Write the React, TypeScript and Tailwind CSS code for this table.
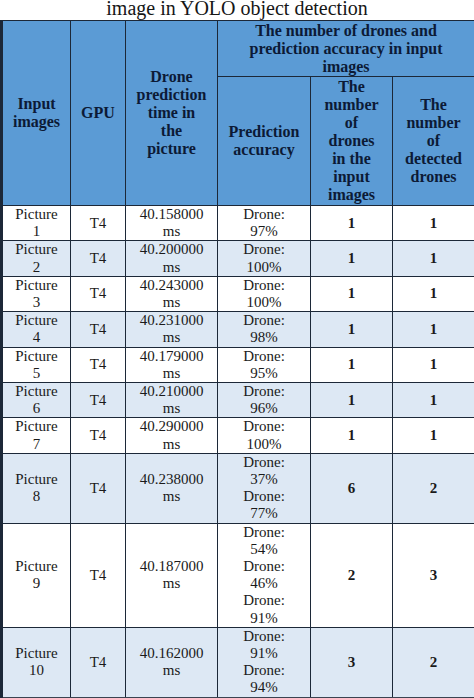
type Row = { pic: string; time: string; acc: string[]; n: string; d: string };

const rows: Row[] = [
  { pic: "1", time: "40.158000", acc: ["97%"], n: "1", d: "1" },
  { pic: "2", time: "40.200000", acc: ["100%"], n: "1", d: "1" },
  { pic: "3", time: "40.243000", acc: ["100%"], n: "1", d: "1" },
  { pic: "4", time: "40.231000", acc: ["98%"], n: "1", d: "1" },
  { pic: "5", time: "40.179000", acc: ["95%"], n: "1", d: "1" },
  { pic: "6", time: "40.210000", acc: ["96%"], n: "1", d: "1" },
  { pic: "7", time: "40.290000", acc: ["100%"], n: "1", d: "1" },
  { pic: "8", time: "40.238000", acc: ["37%", "77%"], n: "6", d: "2" },
  { pic: "9", time: "40.187000", acc: ["54%", "46%", "91%"], n: "2", d: "3" },
  { pic: "10", time: "40.162000", acc: ["91%", "94%"], n: "3", d: "2" },
];

const th = "border border-[#1c2838] bg-[#5b9bd5] p-0 text-center align-middle font-bold text-[16px] leading-[18px] text-[#0c1a36]";
const td = "border border-[#1c2838] p-0 text-center align-middle text-[15px] leading-[17.2px] text-[#1a1a1a]";

export default function App() {
  return (
    <div className="w-[474px] h-[698px] overflow-hidden bg-white font-['Liberation_Serif',serif]">
      {/* caption, top of it is cut off */}
      <div className="h-[20px] text-center text-[20px] leading-[17px] text-[#161616]">
        image in YOLO object detection
      </div>

      <table className="table-fixed border-collapse w-[473px] border-l-[3px] border-l-[#1c2838] border-b-2 border-b-[#3a4350]">
        <colgroup>
          <col className="w-[69px]" />
          <col className="w-[55px]" />
          <col className="w-[92px]" />
          <col className="w-[93px]" />
          <col className="w-[82px]" />
          <col className="w-[82px]" />
        </colgroup>
        <thead>
          <tr className="h-[56px]">
            <th rowSpan={2} className={th}>
              Input<br />images
            </th>
            <th rowSpan={2} className={th}>
              GPU
            </th>
            <th rowSpan={2} className={th}>
              Drone<br />prediction<br />time in<br />the<br />picture
            </th>
            <th colSpan={3} className={th}>
              The number of drones and<br />prediction accuracy in input<br />images
            </th>
          </tr>
          <tr className="h-[129px]">
            <th className={th}>
              Prediction<br />accuracy
            </th>
            <th className={th}>
              The<br />number<br />of<br />drones<br />in the<br />input<br />images
            </th>
            <th className={th}>
              The<br />number<br />of<br />detected<br />drones
            </th>
          </tr>
        </thead>
        <tbody>
          {rows.map((r, i) => (
            <tr key={r.pic} className={i % 2 === 1 ? "bg-[#dde8f4]" : "bg-white"}>
              <td className={td}>
                Picture<br />{r.pic}
              </td>
              <td className={td}>T4</td>
              <td className={td}>
                {r.time}<br />ms
              </td>
              <td className={td}>
                {r.acc.map((a) => (
                  <div key={a}>
                    <div>Drone:</div>
                    <div>{a}</div>
                  </div>
                ))}
              </td>
              <td className={td + " font-bold"}>{r.n}</td>
              <td className={td + " font-bold"}>{r.d}</td>
            </tr>
          ))}
        </tbody>
      </table>
    </div>
  );
}
